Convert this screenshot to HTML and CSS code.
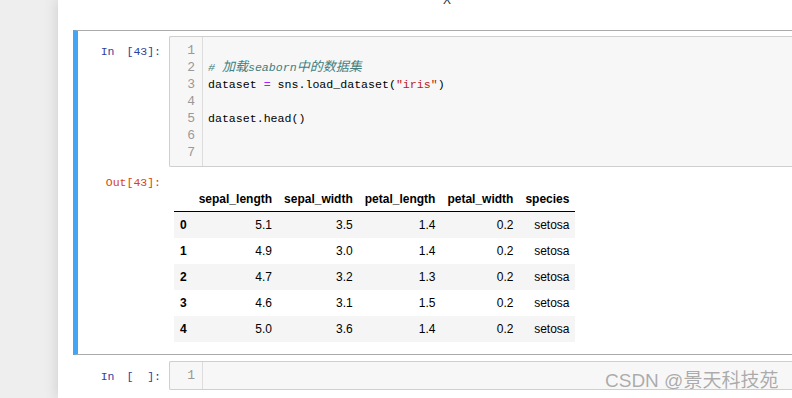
FILE: index.html
```html
<!DOCTYPE html>
<html lang="zh-CN">
<head>
    <meta charset="UTF-8">
    <title>Notebook</title>
    <link rel="stylesheet" href="styles.css">
</head>
<body>
    <div class="page">
        <div class="top"><span class="stray">X</span></div>

        <!-- 当前选中的单元格 -->
        <div class="cell selected">
            <div class="input">
                <div class="prompt in"><span class="kw">In</span><span>[43]:</span></div>
                <div class="editor">
                    <div class="gutter">
                        <div>1</div><div>2</div><div>3</div><div>4</div><div>5</div><div>6</div><div>7</div>
                    </div>
                    <div class="code">
                        <div class="line"></div>
                        <div class="line"><span class="cm">#&nbsp;<span class="cjk">加载</span>seaborn<span class="cjk">中的数据集</span></span></div>
                        <div class="line">dataset <span class="op">=</span> sns.load_dataset(<span class="str">"iris"</span>)</div>
                        <div class="line"></div>
                        <div class="line">dataset.head()</div>
                        <div class="line"></div>
                        <div class="line"></div>
                    </div>
                </div>
            </div>
            <div class="output">
                <div class="prompt out">Out[43]:</div>
                <div class="subarea">
                    <table class="df">
                        <thead>
                            <tr><th></th><th>sepal_length</th><th>sepal_width</th><th>petal_length</th><th>petal_width</th><th>species</th></tr>
                        </thead>
                        <tbody>
                            <tr><th>0</th><td>5.1</td><td>3.5</td><td>1.4</td><td>0.2</td><td>setosa</td></tr>
                            <tr><th>1</th><td>4.9</td><td>3.0</td><td>1.4</td><td>0.2</td><td>setosa</td></tr>
                            <tr><th>2</th><td>4.7</td><td>3.2</td><td>1.3</td><td>0.2</td><td>setosa</td></tr>
                            <tr><th>3</th><td>4.6</td><td>3.1</td><td>1.5</td><td>0.2</td><td>setosa</td></tr>
                            <tr><th>4</th><td>5.0</td><td>3.6</td><td>1.4</td><td>0.2</td><td>setosa</td></tr>
                        </tbody>
                    </table>
                </div>
            </div>
        </div>

        <!-- 空单元格 -->
        <div class="cell">
            <div class="input">
                <div class="prompt in"><span class="kw">In</span><span>[&nbsp;&nbsp;]:</span></div>
                <div class="editor">
                    <div class="gutter"><div>1</div></div>
                    <div class="code"><div class="line"></div></div>
                </div>
            </div>
        </div>
    </div>

    <div class="watermark">CSDN @景天科技苑</div>
</body>
</html>
```

FILE: styles.css
```css
html, body { margin: 0; overflow: hidden; }
body { background: #eeeeee; width: 792px; height: 398px; position: relative; }
.page { margin-left: 58px; width: 780px; height: 398px; background: #fff; box-shadow: 0 0 12px 1px rgba(87,87,87,0.2); }
.top { height: 30px; overflow: hidden; }
.stray { display: block; margin-top: -7px; padding-left: 385px; font: 12px/14px "Liberation Sans", sans-serif; color: #333; }

.cell { margin-left: 15px; border-top: 1px solid transparent; border-bottom: 1px solid transparent; border-left: 5px solid transparent; padding: 5px 0; }
.cell.selected { border-color: #ababab; border-left-color: #42a5f5; }
.input, .output { display: flex; align-items: flex-start; }

.prompt { flex: none; width: 91px; box-sizing: border-box; text-align: right; padding-right: 8px; font: 11.5px/17px "Liberation Mono", monospace; white-space: nowrap; }
.prompt.in { display: flex; justify-content: flex-end; padding-top: 7px; color: #303f9f; }
.prompt .kw { margin-right: 12px; }
.prompt.out { color: #d84315; }

.editor { flex: 1; display: flex; border: 1px solid #cfcfcf; border-right: none; border-radius: 2px 0 0 2px; background: #f7f7f7; }
.gutter { flex: none; width: 33px; box-sizing: border-box; border-right: 1px solid #ddd; padding: 5px 7px 5px 0; text-align: right; color: #999; font: 13px/17px "Liberation Mono", monospace; }
.code { flex: 1; padding: 5px; font: 11.6px/17px "Liberation Mono", monospace; color: #000; }
.line { height: 17px; white-space: pre; }
.cm { color: #408080; font-style: italic; }
.cjk { font-family: "Noto Sans CJK SC", sans-serif; font-size: 13px; line-height: 0; }
.op { color: #aa22ff; }
.str { color: #ba2121; }

.output { margin-top: 7px; }
.subarea { padding: 12px 0 7px 5px; }
.df { border-collapse: collapse; font: 12px "Liberation Sans", Arial, sans-serif; color: #000; }
.df th, .df td { padding: 0 6px; text-align: right; vertical-align: middle; }
.df thead th { height: 25px; border-bottom: 1px solid #000; font-weight: bold; }
.df tbody th, .df tbody td { height: 26px; }
.df tbody th { text-align: left; font-weight: bold; }
.df tbody tr:nth-child(odd) { background: #f5f5f5; }

.watermark { position: absolute; left: 605px; top: 365px; font: 19px "Liberation Sans", "Noto Sans CJK SC", sans-serif; color: rgba(120,120,120,0.6); white-space: nowrap; }
```
